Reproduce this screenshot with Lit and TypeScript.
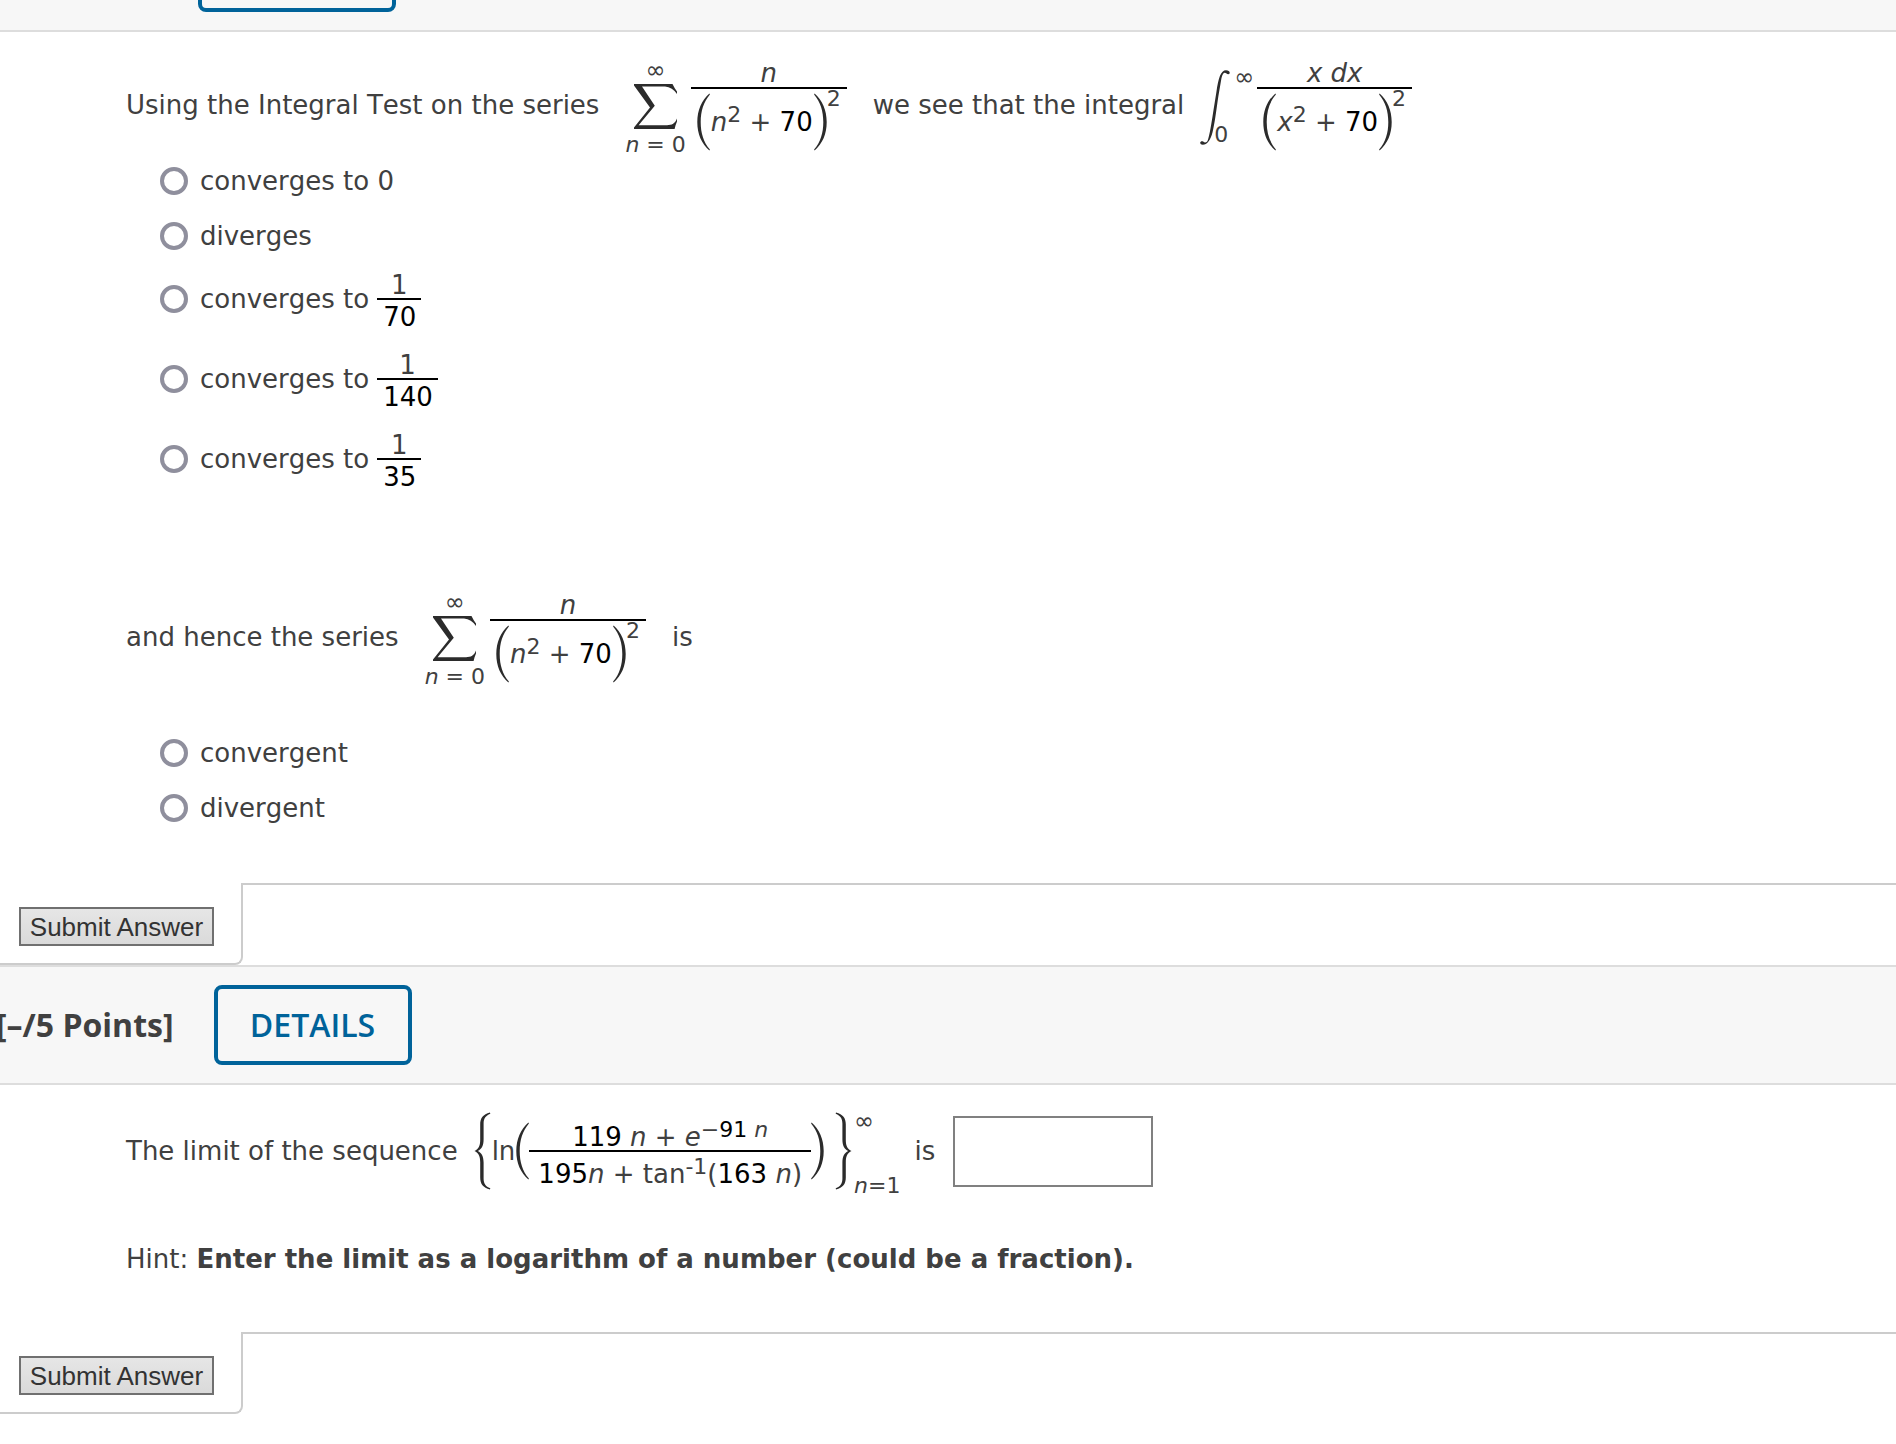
import { LitElement, html, css, svg } from "lit";
import { customElement } from "lit/decorators.js";

const paren = (flip = false) => html`
  <svg class="paren" width="13" height="58" viewBox="0 0 13 58" aria-hidden="true">
    <path
      transform=${flip ? "translate(13 0) scale(-1 1)" : "translate(0 0)"}
      d="M12.4 .4C4.5 7.500 .3 17 .3 29S4.500 50.500 12.400 57.600L12.900 56.600C6.500 49 3.700 40 3.700 29S6.500 9 12.900 1.400Z"
    />
  </svg>
`;

const brace = (flip = false) => html`
  <svg class="brace" width="17" height="78" viewBox="0 0 17 78" aria-hidden="true">
    <path
      transform=${flip ? "translate(17 0) scale(-1 1)" : "translate(0 0)"}
      d="M16 .5C9 2.500 6.200 6 6.200 12.500V28C6.200 34 4.500 37 .5 39C4.500 41 6.200 44 6.200 50V65.500C6.200 72 9 75.500 16 77.500L16.300 76.300C11.500 74.300 9.600 71.500 9.600 66.500V50.500C9.600 44 7.500 41 3.800 39C7.500 37 9.600 34 9.600 27.500V11.500C9.600 6.500 11.500 3.700 16.300 1.700Z"
    />
  </svg>
`;

const sigma = svg`<path d="M0 0H38.500C40 3 41.500 5.500 43 7.500V10C40 5.500 36 3 31 2.600H8L20.800 21.800L4.600 41.200H33C38 41.200 41 39.500 43 34.500V37.500C42 40 41 42.500 40.600 45H0V43.600L16 23.600L0 1.600Z" />`;

const integralSign = svg`<path d="M29.600 3.600C28.800 4.600 27.200 4.300 26.200 3.300C24.200 1.700 22.400 3.600 21.400 8.500L18.400 26C16.600 38 15 52 12.600 62C10.500 70.500 7 74.800 2.800 74.800C1.200 74.800 .2 74 .2 72.600C.4 71.200 2 70.700 3.200 71.600C4.600 72.800 6.500 73 7.700 70.500C9.500 66 11.500 53 13.200 42L16.400 22C18.400 8 20.800 .3 26 .3C28.600 .3 30.200 1.800 29.600 3.600Z" />`;

const squaredDenominator = (variable: string) => html`
  <span class="denominator">
    ${paren()}
    <span class="inner"><i>${variable}</i><sup>2</sup> + <b class="num">70</b></span>
    ${paren(true)}
    <span class="power">2</span>
  </span>
`;

const series = () => html`
  <span class="series">
    <span class="sum">
      <span class="upper">∞</span>
      <svg width="43" height="45" viewBox="0 0 43 45" aria-hidden="true">${sigma}</svg>
      <span class="lower"><i>n</i> = 0</span>
    </span>
    <span class="fraction">
      <span class="numerator"><i>n</i></span>
      ${squaredDenominator("n")}
    </span>
  </span>
`;

interface Choice {
  label: string;
  over?: string;
}

const testChoices: Choice[] = [
  { label: "converges to 0" },
  { label: "diverges" },
  { label: "converges to", over: "70" },
  { label: "converges to", over: "140" },
  { label: "converges to", over: "35" },
];

const seriesChoices: Choice[] = [{ label: "convergent" }, { label: "divergent" }];

@customElement("app-root")
export class AppRoot extends LitElement {
  static styles = css`
    :host {
      display: block;
      min-height: 100vh;
      overflow: hidden;
      background: #fff;
      color: #404040;
      font: 26px/32px "DejaVu Sans", Verdana, sans-serif;
      font-kerning: none;
    }
    *,
    *::before {
      box-sizing: border-box;
    }
    svg {
      display: block;
      flex: none;
      fill: #2b2b2b;
    }
    .bar {
      display: flex;
      align-items: center;
      gap: 40px;
      padding: 18px 0;
      background: #f7f7f7;
      border-top: 2px solid #ddd;
      border-bottom: 2px solid #ddd;
      font-family: "Open Sans", sans-serif;
    }
    .bar.cut {
      height: 32px;
      align-items: flex-end;
      padding: 0 0 18px 198px;
      border-top: 0;
      overflow: hidden;
    }
    .points {
      margin: 0 0 0 -4px;
      font-size: 32px;
      line-height: 40px;
      font-weight: 700;
      white-space: nowrap;
    }
    .details {
      width: 198px;
      height: 80px;
      flex: none;
      padding: 0;
      border: 4px solid #00639a;
      border-radius: 8px;
      background: transparent;
      color: #00639a;
      font: 600 32px/40px "Open Sans", sans-serif;
    }
    .question {
      padding: 23px 126px 48px;
    }
    .question.second {
      padding: 14px 126px 53px;
    }
    .statement {
      display: flex;
      align-items: center;
      min-height: 100px;
      white-space: nowrap;
    }
    .statement.gapped {
      gap: 26px;
    }
    .conclusion {
      margin-top: 84px;
    }
    .series,
    .integral {
      display: flex;
      align-items: center;
      gap: 5px;
    }
    .integral {
      margin-left: -10px;
    }
    .sum {
      display: flex;
      flex-direction: column;
      align-items: center;
      height: 100px;
      font-size: 22px;
    }
    .upper {
      height: 29px;
      font-size: 24px;
      line-height: 30px;
    }
    .lower {
      height: 26px;
      line-height: 32px;
    }
    .bounds {
      display: grid;
      grid-template-columns: 14px 16px 22px;
      grid-template-rows: 38px 37px;
      padding-top: 4px;
      font-size: 22px;
    }
    .bounds svg {
      grid-area: 1 / 1 / 3 / 3;
    }
    .bounds .to {
      grid-area: 1 / 3;
      font-size: 24px;
      line-height: 14px;
      padding-left: 4px;
    }
    .bounds .from {
      grid-area: 2 / 2;
      align-self: end;
      line-height: 20px;
    }
    .fraction {
      display: flex;
      flex-direction: column;
      align-items: stretch;
    }
    .numerator {
      height: 32px;
      line-height: 36px;
      text-align: center;
    }
    .denominator {
      display: flex;
      align-items: center;
      height: 68px;
      padding: 0 6px;
      border-top: 2px solid #000;
    }
    .inner {
      padding: 0 1px;
    }
    .power {
      align-self: flex-start;
      font-size: 22px;
      line-height: 20px;
    }
    sup {
      font-size: 22px;
      line-height: 0;
      vertical-align: 9px;
    }
    .num {
      color: #000;
      font-weight: 400;
    }
    .choices {
      margin: -2px 0 0;
      padding: 0 0 0 34px;
      border: 0;
    }
    .conclusion + .choices {
      margin-top: 38px;
    }
    .choice {
      display: flex;
      align-items: center;
      height: 55px;
    }
    .choice.tall {
      height: 72px;
      margin-bottom: 8px;
    }
    .choice input {
      appearance: none;
      flex: none;
      width: 28px;
      height: 28px;
      margin: 0 12px 0 0;
      border: 4px solid #8f8f9d;
      border-radius: 50%;
      background: #fff;
    }
    .choice input:checked {
      background: #00639a;
      box-shadow: inset 0 0 0 3px #fff;
    }
    .choice label {
      display: flex;
      align-items: center;
      gap: 8px;
    }
    .choice .over {
      display: flex;
      flex-direction: column;
      text-align: center;
    }
    .over .top {
      height: 34px;
      padding-top: 8px;
      line-height: 26px;
    }
    .over .num {
      padding: 0 5px 0 6px;
      border-top: 2px solid #000;
      line-height: 34px;
    }
    .ratio {
      display: flex;
      flex-direction: column;
      text-align: center;
    }
    .ratio .top {
      height: 44px;
      padding-top: 18px;
      line-height: 26px;
    }
    .ratio .bottom {
      height: 46px;
      padding: 0 9px;
      border-top: 2px solid #000;
      line-height: 44px;
    }
    .sequence {
      display: flex;
      align-items: center;
      margin-left: 16px;
      gap: 1px;
    }
    .group {
      display: flex;
      align-items: center;
      margin-right: 10px;
    }
    .range {
      display: flex;
      flex-direction: column;
      justify-content: space-between;
      height: 104px;
      padding-left: 1px;
      font-size: 22px;
    }
    .range .to {
      font-size: 24px;
      line-height: 44px;
    }
    .range .from {
      line-height: 34px;
    }
    .answer {
      display: flex;
      align-items: center;
      gap: 18px;
      margin-left: 14px;
    }
    .answer input {
      width: 200px;
      height: 71px;
      padding: 0 12px;
      border: 2px solid #808080;
      border-radius: 0;
      background: #fff;
      color: #404040;
      font: inherit;
    }
    .hint {
      margin: 36px 0 0;
      line-height: 40px;
    }
    .submit {
      display: flex;
      height: 82px;
    }
    .submit .tab {
      width: 243px;
      flex: none;
      padding: 24px 0 0 19px;
      border-right: 2px solid #ccc;
      border-bottom: 2px solid #ccc;
      border-radius: 0 0 8px 0;
    }
    .submit .rest {
      flex: 1;
      border-top: 2px solid #ccc;
    }
    .submit button {
      display: block;
      width: 195px;
      height: 39px;
      padding: 0;
      border: 2px solid #707070;
      border-radius: 0;
      background: linear-gradient(#e6e6e6, #dadada);
      color: #333;
      font: 26px/34px "Liberation Sans", Arial, sans-serif;
      white-space: nowrap;
    }
  `;

  private choices(name: string, legend: string, items: Choice[]) {
    return html`
      <fieldset class="choices" aria-label=${legend}>
        ${items.map(
          (item, index) => html`
            <div class="choice ${item.over ? "tall" : ""}">
              <input type="radio" id="${name}-${index}" name=${name} value=${index} />
              <label for="${name}-${index}">
                <span>${item.label}</span>
                ${item.over
                  ? html`<span class="over"><span class="top">1</span><span class="num">${item.over}</span></span>`
                  : null}
              </label>
            </div>
          `,
        )}
      </fieldset>
    `;
  }

  private submit() {
    return html`
      <div class="submit">
        <div class="tab"><button type="button">Submit Answer</button></div>
        <div class="rest"></div>
      </div>
    `;
  }

  render() {
    return html`
      <header class="bar cut">
        <button class="details" type="button" aria-label="Details"></button>
      </header>
      <section class="question">
        <div class="statement gapped">
          <span>Using the Integral Test on the series</span>
          ${series()}
          <span>we see that the integral</span>
          <span class="integral">
            <span class="bounds">
              <svg width="30" height="75" viewBox="0 0 30 75" aria-hidden="true">${integralSign}</svg>
              <span class="to">∞</span>
              <span class="from">0</span>
            </span>
            <span class="fraction">
              <span class="numerator"><i>x dx</i></span>
              ${squaredDenominator("x")}
            </span>
          </span>
        </div>
        ${this.choices("test", "Integral test result", testChoices)}
        <div class="statement gapped conclusion">
          <span>and hence the series</span>
          ${series()}
          <span>is</span>
        </div>
        ${this.choices("series", "Series result", seriesChoices)}
      </section>
      ${this.submit()}
      <header class="bar">
        <h2 class="points">[–/5 Points]</h2>
        <button class="details" type="button">DETAILS</button>
      </header>
      <section class="question second">
        <div class="statement">
          <span>The limit of the sequence</span>
          <span class="sequence">
            ${brace()}
            <span>ln</span>
            <span class="group">
              ${paren()}
              <span class="ratio">
                <span class="top"><b class="num">119</b> <i>n</i> + <i>e</i><sup>−<b class="num">91</b> <i>n</i></sup></span>
                <span class="bottom"><b class="num">195</b><i>n</i> + tan<sup>-1</sup>(<b class="num">163</b> <i>n</i>)</span>
              </span>
              ${paren(true)}
            </span>
            ${brace(true)}
            <span class="range">
              <span class="to">∞</span>
              <span class="from"><i>n</i>=1</span>
            </span>
          </span>
          <span class="answer">
            <label for="limit">is</label>
            <input id="limit" type="text" autocomplete="off" />
          </span>
        </div>
        <p class="hint">Hint: <b>Enter the limit as a logarithm of a number (could be a fraction).</b></p>
      </section>
      ${this.submit()}
    `;
  }
}
